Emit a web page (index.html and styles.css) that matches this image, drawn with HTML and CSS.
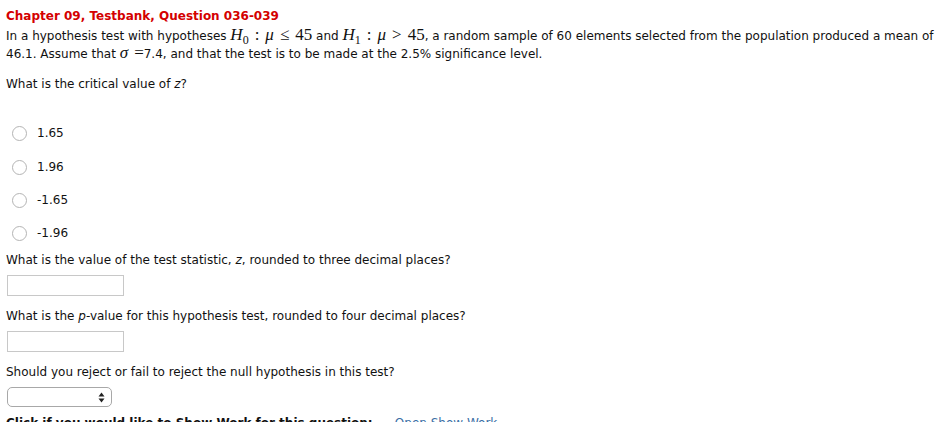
FILE: index.html
```html
<!DOCTYPE html>
<html lang="en">
  <head>
    <meta charset="UTF-8" />
    <title>Question 036-039</title>
    <link rel="stylesheet" href="styles.css">
  </head>
  <body>
    <div class="question">
      <h1 class="title">Chapter 09, Testbank, Question 036-039</h1>
      <p class="intro">
        In a hypothesis test with hypotheses
        <span class="math"><i>H</i><sub>0</sub><span class="op">:</span><i>μ</i><span class="op">≤</span>45</span> and
        <span class="math"><i>H</i><sub>1</sub><span class="op">:</span><i>μ</i><span class="op">&gt;</span>45</span>, a random
        sample of 60 elements selected from the population produced a mean of
        46.1. Assume that <span class="math"><i>σ</i><span class="op eq">=</span></span>7.4, and that the test
        is to be made at the 2.5% significance level.
      </p>

      <p class="ask">What is the critical value of <i>z</i>?</p>
      <ul class="choices">
        <li><label><input type="radio" name="crit" /> 1.65</label></li>
        <li><label><input type="radio" name="crit" /> 1.96</label></li>
        <li><label><input type="radio" name="crit" /> -1.65</label></li>
        <li><label><input type="radio" name="crit" /> -1.96</label></li>
      </ul>

      <p class="ask after-choices">What is the value of the test statistic, <i>z</i>, rounded to three decimal places?</p>
      <input class="answer" type="text" />

      <p class="ask after-input">What is the <i>p</i>-value for this hypothesis test, rounded to four decimal places?</p>
      <input class="answer" type="text" />

      <p class="ask after-input">Should you reject or fail to reject the null hypothesis in this test?</p>
      <div class="select-wrap">
        <select class="decision">
          <option></option>
          <option>reject</option>
          <option>fail to reject</option>
        </select>
        <svg class="arrows" width="7" height="11" viewBox="0 0 7 11">
          <path d="M0.5 4.5 L3.5 0.5 L6.5 4.5 Z M0.5 6.5 L3.5 10.5 L6.5 6.5 Z" fill="#222" />
        </svg>
      </div>

      <p class="show-work">
        Click if you would like to Show Work for this question:
        <a href="#" class="open-work">Open Show Work</a>
      </p>
    </div>
  </body>
</html>
```

FILE: styles.css
```css
body {
  margin: 0;
  font-family: "DejaVu Sans", Verdana, sans-serif;
  font-size: 12px;
  color: #111;
  background-color: #fff;
}

.question {
  padding: 7px 6px 0 6px;
}

.title {
  margin: 0;
  font-size: 12px;
  font-weight: bold;
  color: #d40000;
  line-height: 18px;
}

.intro {
  margin: 2px 0 0 0;
  line-height: 18px;
}

.math {
  font-family: "Liberation Serif", "Times New Roman", serif;
  font-size: 17px;
  line-height: 0;
}

.math sub {
  font-size: 12px;
  line-height: 0;
}

.math .op {
  margin: 0 6px;
}

.math .eq {
  margin-right: 0;
}

.ask {
  margin: 12px 0 0 0;
  line-height: 18px;
}

.choices {
  list-style-type: none;
  padding: 0;
  margin: 32px 0 0 0;
}

.choices li + li {
  margin-top: 17px;
}

.choices li:nth-child(2) {
  margin-top: 18px;
}

.choices label {
  display: flex;
  align-items: center;
  gap: 10px;
  height: 16px;
}

.choices input {
  appearance: none;
  -webkit-appearance: none;
  width: 15px;
  height: 15px;
  margin: 0 0 0 6px;
  border: 1px solid #b4b4b4;
  border-radius: 50%;
  background-color: #fff;
}

.ask.after-choices {
  margin-top: 10px;
}

.ask.after-input {
  margin-top: 11px;
}

.answer {
  display: block;
  box-sizing: border-box;
  width: 117px;
  height: 21px;
  margin: 6px 0 0 1px;
  border: 1px solid #c8c8c8;
  padding: 0;
}

.select-wrap {
  position: relative;
  width: 105px;
  height: 20px;
  margin: 6px 0 0 1px;
}

.decision {
  appearance: none;
  -webkit-appearance: none;
  box-sizing: border-box;
  width: 105px;
  height: 20px;
  border: 1px solid #a8a8a8;
  border-radius: 5px;
  background-color: #fff;
}

.arrows {
  position: absolute;
  right: 7px;
  top: 5px;
}

.show-work {
  margin: 7px 0 0 0;
  font-weight: bold;
  line-height: 18px;
}

.open-work {
  font-weight: normal;
  color: #3a6ea5;
  text-decoration: none;
  margin-left: 18px;
}
```
